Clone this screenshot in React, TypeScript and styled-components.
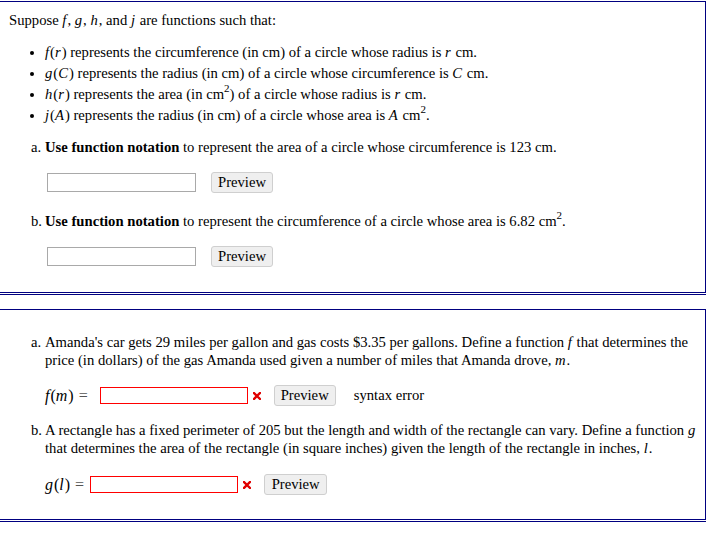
import React from 'react';
import styled, { createGlobalStyle } from 'styled-components';

const NAVY = '#000080';
const FONT = '"Liberation Serif", "Times New Roman", serif';

const GlobalStyle = createGlobalStyle`
  html, body {
    margin: 0;
    padding: 0;
    background: #fff;
  }
  body {
    font-family: ${FONT};
    font-size: 11pt;
    color: #000;
  }
`;

const Page = styled.div`
  width: 706px;
  padding-top: 1px;
`;

const ProblemBox = styled.section<{ $top: number; $bottom: number }>`
  border: 1px solid ${NAVY};
  border-left: none;
  padding: ${(p) => p.$top}px 8px ${(p) => p.$bottom}px 9px;
`;

const Rule = styled.div<{ $after?: number }>`
  height: 1px;
  margin-top: 1px;
  margin-bottom: ${(p) => p.$after ?? 0}px;
  background: ${NAVY};
`;

const Intro = styled.p`
  margin: 0;
  line-height: 20px;
`;

const Facts = styled.ul`
  margin: 12px 0 0;
  padding-left: 36px;
  line-height: 21px;
  list-style: disc;
`;

const M = styled.i`
  font-family: ${FONT};
  font-style: italic;
  padding-right: 1px;
`;

const Sup = styled.sup`
  font-size: 11px;
  line-height: 0;
  vertical-align: 7px;
`;

const Part = styled.div<{ $gap: number }>`
  display: grid;
  grid-template-columns: 14px 1fr;
  margin: ${(p) => p.$gap}px 0 0 22px;
  line-height: 18px;
`;

const Letter = styled.span``;

const AnswerRow = styled.div<{ $indent: number; $gap?: number }>`
  display: flex;
  align-items: center;
  height: 21px;
  margin: ${(p) => p.$gap ?? 15}px 0 0 ${(p) => p.$indent}px;
`;

const AnswerInput = styled.input<{ $invalid?: boolean; $w: number }>`
  box-sizing: border-box;
  width: ${(p) => p.$w}px;
  height: ${(p) => (p.$invalid ? 17 : 19)}px;
  margin: 0;
  padding: 0 2px;
  border: 1px solid ${(p) => (p.$invalid ? '#ff0000' : '#a9a9a9')};
  border-radius: 0;
  outline: none;
  background: #fff;
  font: 11pt ${FONT};
`;

const PreviewButton = styled.button<{ $w?: number; $gap?: number }>`
  box-sizing: border-box;
  width: ${(p) => p.$w ?? 62}px;
  height: 21px;
  margin-left: ${(p) => p.$gap ?? 15}px;
  padding: 0;
  font: 11pt ${FONT};
  color: #000;
  background: #efefef;
  border: 1px solid #cfcfcf;
  border-radius: 3px;
`;

const MathLabel = styled.span<{ $after: number }>`
  margin-right: ${(p) => p.$after}px;
  white-space: nowrap;
  font-size: 16px;
`;

const Equals = styled.span`
  margin: 0 5px;
  color: #555;
`;

const ErrorMark = styled.svg`
  margin-left: 5px;
  flex: none;
`;

const Status = styled.span`
  margin-left: 18px;
`;

const Cross = () => (
  <ErrorMark width="8" height="8" viewBox="0 0 8 8">
    <path d="M1 1 L7 7 M7 1 L1 7" stroke="#e00000" strokeWidth="2.4" strokeLinecap="square" />
  </ErrorMark>
);

export default function App() {
  return (
    <Page>
      <GlobalStyle />
      <ProblemBox $top={8} $bottom={25}>
        <Intro>
          Suppose <M>f</M>, <M>g</M>, <M>h</M>, and <M>j</M> are functions such that:
        </Intro>
        <Facts>
          <li>
            <M>f</M>(<M>r</M>) represents the circumference (in cm) of a circle whose radius is <M>r</M> cm.
          </li>
          <li>
            <M>g</M>(<M>C</M>) represents the radius (in cm) of a circle whose circumference is <M>C</M> cm.
          </li>
          <li>
            <M>h</M>(<M>r</M>) represents the area (in cm<Sup>2</Sup>) of a circle whose radius is <M>r</M> cm.
          </li>
          <li>
            <M>j</M>(<M>A</M>) represents the radius (in cm) of a circle whose area is <M>A</M> cm<Sup>2</Sup>.
          </li>
        </Facts>
        <Part $gap={12}>
          <Letter>a.</Letter>
          <span>
            <b>Use function notation</b> to represent the area of a circle whose circumference is 123 cm.
          </span>
        </Part>
        <AnswerRow $indent={38} $gap={16}>
          <AnswerInput $w={149} />
          <PreviewButton>Preview</PreviewButton>
        </AnswerRow>
        <Part $gap={19}>
          <Letter>b.</Letter>
          <span>
            <b>Use function notation</b> to represent the circumference of a circle whose area is 6.82 cm<Sup>2</Sup>.
          </span>
        </Part>
        <AnswerRow $indent={38} $gap={16}>
          <AnswerInput $w={149} />
          <PreviewButton>Preview</PreviewButton>
        </AnswerRow>
      </ProblemBox>
      <Rule $after={14} />
      <ProblemBox $top={23} $bottom={24}>
        <Part $gap={0}>
          <Letter>a.</Letter>
          <span>
            Amanda's car gets 29 miles per gallon and gas costs $3.35 per gallons. Define a function <M>f</M> that
            determines the price (in dollars) of the gas Amanda used given a number of miles that Amanda drove, <M>m</M>.
          </span>
        </Part>
        <AnswerRow $indent={36} $gap={16}>
          <MathLabel $after={7}>
            <M>f</M>(<M>m</M>)<Equals>=</Equals>
          </MathLabel>
          <AnswerInput $invalid $w={148} />
          <Cross />
          <PreviewButton $gap={13}>Preview</PreviewButton>
          <Status>syntax error</Status>
        </AnswerRow>
        <Part $gap={15}>
          <Letter>b.</Letter>
          <span>
            A rectangle has a fixed perimeter of 205 but the length and width of the rectangle can vary. Define a
            function <M>g</M> that determines the area of the rectangle (in square inches) given the length of the
            rectangle in inches, <M>l</M>.
          </span>
        </Part>
        <AnswerRow $indent={36} $gap={17}>
          <MathLabel $after={1}>
            <M>g</M>(<M>l</M>)<Equals>=</Equals>
          </MathLabel>
          <AnswerInput $invalid $w={148} />
          <Cross />
          <PreviewButton $w={63} $gap={13}>
            Preview
          </PreviewButton>
        </AnswerRow>
      </ProblemBox>
      <Rule />
    </Page>
  );
}
